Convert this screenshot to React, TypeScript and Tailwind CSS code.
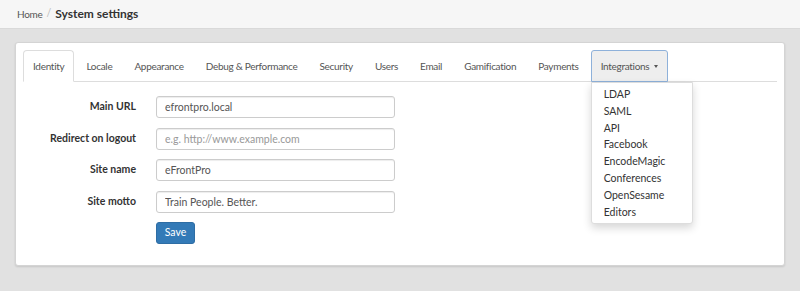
import React from 'react'

const tabs = [
  'Identity',
  'Locale',
  'Appearance',
  'Debug & Performance',
  'Security',
  'Users',
  'Email',
  'Gamification',
  'Payments',
]

const integrations = ['LDAP', 'SAML', 'API', 'Facebook', 'EncodeMagic', 'Conferences', 'OpenSesame', 'Editors']

const fields = [
  { label: 'Main URL', value: 'efrontpro.local', placeholder: '' },
  { label: 'Redirect on logout', value: '', placeholder: 'e.g. http://www.example.com' },
  { label: 'Site name', value: 'eFrontPro', placeholder: '' },
  { label: 'Site motto', value: 'Train People. Better.', placeholder: '' },
]

export default function App(): JSX.Element {
  return (
    <div className="min-h-screen bg-[#e1e1e1] text-[10.5px] text-[#555] font-['Lato',sans-serif]">
      {/* breadcrumb bar */}
      <div className="h-[29px] bg-[#f6f6f6] border-b border-[#d9d9d9] flex items-center px-[17px]">
        <span className="text-[#555] text-[10px] tracking-[-0.3px]">Home</span>
        <span className="mx-[4px] text-[#bbb]">/</span>
        <span className="font-bold text-[12px] text-[#333]">System settings</span>
      </div>

      <div className="mx-[15px] mt-[13px] bg-white border border-[#d4d4d4] rounded-[3px] shadow-[0_1px_2px_rgba(0,0,0,0.12)] p-[7px] pb-[21px]">
        <ul className="flex border-b border-[#ddd] leading-[14px] text-[10px] tracking-[-0.3px]">
          {tabs.map((t, i) => (
            <li key={t} className="-mb-px mr-[2px]">
              <div
                className={
                  i === 0
                    ? 'px-[9px] py-[8px] bg-white border border-[#ddd] border-b-white rounded-t-[4px] text-[#555]'
                    : 'px-[9px] py-[8px] border border-transparent text-[#555]'
                }
              >
                {t}
              </div>
            </li>
          ))}
          <li className="-mb-px relative">
            <div className="px-[9px] py-[8px] bg-[#eee] border border-[#8eb1da] rounded-t-[3px] text-[#555] flex items-center">
              Integrations
              <span className="ml-[5px] w-0 h-0 border-l-[2.5px] border-r-[2.5px] border-t-[3px] border-l-transparent border-r-transparent border-t-[#555]" />
            </div>
            <div className="absolute left-0 top-full z-10 w-[102px] bg-white border border-[#ddd] rounded-b-[3px] shadow-[0_4px_8px_rgba(0,0,0,0.16)] py-[3px] text-[#333] text-[10.5px] tracking-normal">
              {integrations.map((n) => (
                <div key={n} className="px-[12px] leading-[16.8px]">
                  {n}
                </div>
              ))}
            </div>
          </li>
        </ul>

        <div className="mt-[14px] flex flex-col gap-[9.5px]">
          {fields.map((f) => (
            <div key={f.label} className="flex items-center">
              <label className="w-[113px] text-right font-bold text-[#333]">{f.label}</label>
              <input
                className="ml-[20px] w-[239px] h-[22px] px-[8px] border border-[#ccc] rounded-[3px] shadow-[inset_0_1px_1px_rgba(0,0,0,0.075)] text-[#555] placeholder:text-[#999] outline-none"
                defaultValue={f.value}
                placeholder={f.placeholder}
              />
            </div>
          ))}
          <div className="flex">
            <button className="ml-[133px] w-[39px] h-[22px] bg-[#337ab7] border border-[#2e6da4] rounded-[3px] text-white">
              Save
            </button>
          </div>
        </div>
      </div>
    </div>
  )
}
